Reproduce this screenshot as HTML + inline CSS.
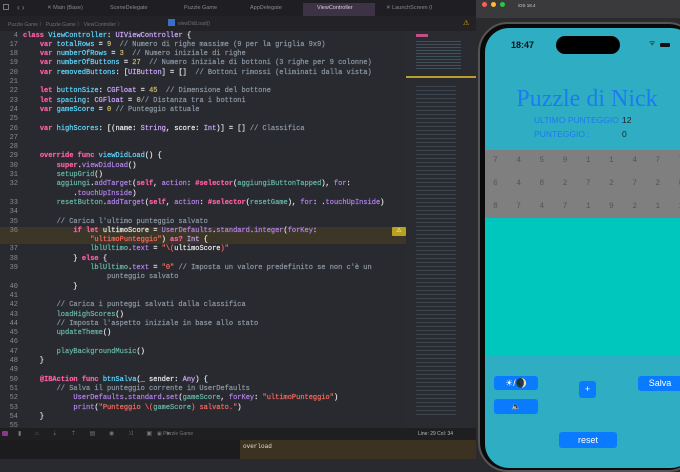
<!DOCTYPE html>
<html><head><meta charset="utf-8"><style>
*{margin:0;padding:0;box-sizing:border-box}
body{width:680px;height:459px;overflow:hidden;background:#292a30;position:relative;font-family:"Liberation Sans",sans-serif}
.abs{position:absolute}
#code{position:absolute;left:0;top:31px;width:406px;height:397px;background:#292a30}
.l{position:absolute;left:0;height:9.3px;width:406px;font:7px/9.3px "Liberation Mono",monospace;color:#e8e8ea;white-space:pre;-webkit-text-stroke:0.2px}
.n{display:inline-block;width:18px;text-align:right;color:#8a8a8e;margin-right:5px;-webkit-text-stroke:0}
.k{color:#fc5fa3;font-weight:bold}.t{color:#d0a8ff}.d{color:#5dd8ff}.p{color:#67b7a4}.c{color:#8c98a4}.m{color:#d0bf69}.s{color:#fc6a5d}.f{color:#b281eb}
.g{font:8px "Liberation Mono",monospace;color:#555;position:absolute}
.btn{position:absolute;background:#0a7aff;border-radius:3px;color:#fff;font-size:9px;text-align:center}
</style></head><body>
<div class="abs" style="left:0;top:0;width:478px;height:16px;background:#1f1f23;font-size:5.5px;color:#8a8a8e">
<div class="abs" style="left:3px;top:4px;width:6px;height:6px;border:1px solid #777"></div>
<span class="abs" style="left:17px;top:3px;font-size:8px">‹ ›</span>
<span class="abs" style="left:47px;top:5px">✕ Main (Base)</span>
<span class="abs" style="left:110px;top:5px">SceneDelegate</span>
<span class="abs" style="left:184px;top:5px">Puzzle Game</span>
<span class="abs" style="left:250px;top:5px">AppDelegate</span>
<div class="abs" style="left:303px;top:3px;width:72px;height:13px;background:#3e3346;color:#d8d0e0;padding:2px 0 0 14px">ViewController</div>
<span class="abs" style="left:386px;top:5px">✕ LaunchScreen (I</span>
</div>
<div class="abs" style="left:0;top:16px;width:478px;height:15px;background:#232327;font-size:5px;color:#6e6e73">
<span class="abs" style="left:8px;top:5px">Puzzle Game 〉 Puzzle Game 〉 ViewController 〉</span>
<span class="abs" style="left:168px;top:3px;width:7px;height:7px;background:#3a6fc8"></span>
<span class="abs" style="left:178px;top:5px">viewDidLoad()</span>
<span class="abs" style="left:463px;top:3px;color:#e0b000;font-size:7px">⚠</span>
</div>
<div id="code">
<div class="abs" style="left:0;top:196px;width:406px;height:17px;background:#3b3628"></div>
<div class="abs" style="left:392px;top:196px;width:14px;height:9px;background:#b8a020;border-radius:1px;font-size:6px;text-align:center;color:#fff">⚠</div>
</div>
<div id="lines"></div>
<div class="abs" style="left:406px;top:31px;width:70px;height:397px;background:#2a2b31">
<div class="abs" style="left:10px;top:3px;width:12px;height:3px;background:#c0508a"></div>
<div class="abs" style="left:0;top:45px;width:70px;height:2px;background:#b89e2a"></div>
<div class="abs" style="left:10px;top:10px;width:45px;height:30px;background:repeating-linear-gradient(#4d6a78 0 1px,transparent 1px 3px);opacity:.6"></div>
<div class="abs" style="left:10px;top:55px;width:40px;height:330px;background:repeating-linear-gradient(#4d5e6a 0 1px,transparent 1px 4px);opacity:.5"></div>
</div>
<div class="abs" style="left:0;top:428px;width:478px;height:12px;background:#1f1f22;font-size:5px;color:#777">
<span class="abs" style="left:2px;top:3px;width:6px;height:5px;background:#8a3a8a;border-radius:1px"></span>
<span class="abs" style="left:18px;top:2px;font-size:6px;letter-spacing:6px">▮ ⌂ ⇣ ⇡ ▤ ◉ ⤨ ▣ ➤</span>
<span class="abs" style="left:157px;top:3px">▣ Puzzle Game</span>
<span class="abs" style="left:418px;top:3px;color:#bbb">Line: 29 Col: 34</span>
</div>
<div class="abs" style="left:0;top:440px;width:478px;height:19px;background:#1c1c1e"></div>
<div class="abs" style="left:240px;top:440px;width:238px;height:19px;background:#3b3222;font:6px 'Liberation Mono',monospace;color:#e8e0d0;padding:3px 3px">overload</div>
<div class="abs" style="left:476px;top:0;width:204px;height:18px;background:#3a3a3c"></div>
<div class="abs" style="left:482px;top:2px;width:5px;height:5px;border-radius:50%;background:#ff5f57"></div>
<div class="abs" style="left:491px;top:2px;width:5px;height:5px;border-radius:50%;background:#febc2e"></div>
<div class="abs" style="left:500px;top:2px;width:5px;height:5px;border-radius:50%;background:#28c840"></div>
<span class="abs" style="left:518px;top:3px;font-size:4.5px;color:#ccc">iOS 18.4</span>
<div class="abs" style="left:476px;top:18px;width:204px;height:441px;background:#2b2b2e"></div>
<div class="abs" style="left:478px;top:22px;width:220px;height:450px;background:#0a0a0a;border-radius:30px;border:2px solid #555"></div>
<div class="abs" style="left:485px;top:28px;width:210px;height:440px;background:#2eadc3;border-radius:24px;overflow:hidden">
<span class="abs" style="left:26px;top:12px;font-size:9px;font-weight:bold;color:#111">18:47</span>
<div class="abs" style="left:71px;top:8px;width:64px;height:18px;background:#000;border-radius:9px"></div>
<span class="abs" style="left:164px;top:11px;font-size:7px;color:#111">ᯤ</span>
<div class="abs" style="left:175px;top:15px;width:10px;height:4px;background:#111;border-radius:1px"></div>
<div class="abs" style="left:0;top:58px;width:210px;text-align:center;font:24px 'Liberation Serif',serif;color:#1a7cf0;padding-right:6px">Puzzle di Nick</div>
<span class="abs" style="left:49px;top:87px;font-size:8.5px;color:#1a7cf0">ULTIMO PUNTEGGIO :</span>
<span class="abs" style="left:137px;top:87px;font-size:8.5px;color:#222">12</span>
<span class="abs" style="left:49px;top:101px;font-size:8.5px;color:#1a7cf0">PUNTEGGIO :</span>
<span class="abs" style="left:137px;top:101px;font-size:8.5px;color:#222">0</span>
<div class="abs" style="left:0;top:122px;width:210px;height:68px;background:#7f7f7f"></div>
<div class="abs" style="left:0;top:190px;width:210px;height:138px;background:#00c7be"></div>
</div>
<div id="grid"></div>
<div class="btn" style="left:494px;top:376px;width:44px;height:14px;font-size:9px;line-height:14px">☀/🌒</div>
<div class="btn" style="left:494px;top:399px;width:44px;height:15px;line-height:15px;font-size:8px">🔈</div>
<div class="btn" style="left:579px;top:381px;width:17px;height:17px;line-height:17px">+</div>
<div class="btn" style="left:638px;top:376px;width:44px;height:15px;line-height:15px">Salva</div>
<div class="btn" style="left:559px;top:432px;width:58px;height:16px;line-height:16px">reset</div>
<script>
const L=[
['4','<span class="k">class</span> <span class="d">ViewController</span>: <span class="t">UIViewController</span> {'],
['17','    <span class="k">var</span> <span class="d">totalRows</span> = <span class="m">9</span>  <span class="c">// Numero di righe massime (9 per la griglia 9x9)</span>'],
['18','    <span class="k">var</span> <span class="d">numberOfRows</span> = <span class="m">3</span>  <span class="c">// Numero iniziale di righe</span>'],
['19','    <span class="k">var</span> <span class="d">numberOfButtons</span> = <span class="m">27</span>  <span class="c">// Numero iniziale di bottoni (3 righe per 9 colonne)</span>'],
['20','    <span class="k">var</span> <span class="d">removedButtons</span>: [<span class="t">UIButton</span>] = []  <span class="c">// Bottoni rimossi (eliminati dalla vista)</span>'],
['21',''],
['22','    <span class="k">let</span> <span class="d">buttonSize</span>: <span class="t">CGFloat</span> = <span class="m">45</span>  <span class="c">// Dimensione del bottone</span>'],
['23','    <span class="k">let</span> <span class="d">spacing</span>: <span class="t">CGFloat</span> = <span class="m">0</span><span class="c">// Distanza tra i bottoni</span>'],
['24','    <span class="k">var</span> <span class="d">gameScore</span> = <span class="m">0</span> <span class="c">// Punteggio attuale</span>'],
['25',''],
['26','    <span class="k">var</span> <span class="d">highScores</span>: [(name: <span class="t">String</span>, score: <span class="t">Int</span>)] = [] <span class="c">// Classifica</span>'],
['27',''],['28',''],
['29','    <span class="k">override func</span> <span class="d">viewDidLoad</span>() {'],
['30','        <span class="k">super</span>.<span class="f">viewDidLoad</span>()'],
['31','        <span class="p">setupGrid</span>()'],
['32','        <span class="p">aggiungi</span>.<span class="f">addTarget</span>(<span class="k">self</span>, <span class="f">action</span>: <span class="k">#selector</span>(<span class="p">aggiungiButtonTapped</span>), <span class="f">for</span>:'],
['','            .<span class="f">touchUpInside</span>)'],
['33','        <span class="p">resetButton</span>.<span class="f">addTarget</span>(<span class="k">self</span>, <span class="f">action</span>: <span class="k">#selector</span>(<span class="p">resetGame</span>), <span class="f">for</span>: .<span class="f">touchUpInside</span>)'],
['34',''],
['35','        <span class="c">// Carica l\'ultimo punteggio salvato</span>'],
['36','            <span class="k">if let</span> ultimoScore = <span class="f">UserDefaults</span>.<span class="f">standard</span>.<span class="f">integer</span>(<span class="f">forKey</span>:'],
['','                <span class="s">"ultimoPunteggio"</span>) <span class="k">as?</span> <span class="t">Int</span> {'],
['37','                <span class="p">lblUltimo</span>.<span class="f">text</span> = <span class="s">"\\(</span>ultimoScore<span class="s">)"</span>'],
['38','            } <span class="k">else</span> {'],
['39','                <span class="p">lblUltimo</span>.<span class="f">text</span> = <span class="s">"0"</span> <span class="c">// Imposta un valore predefinito se non c\'è un</span>'],
['','                    <span class="c">punteggio salvato</span>'],
['40','            }'],
['41',''],
['42','        <span class="c">// Carica i punteggi salvati dalla classifica</span>'],
['43','        <span class="p">loadHighScores</span>()'],
['44','        <span class="c">// Imposta l\'aspetto iniziale in base allo stato</span>'],
['45','        <span class="p">updateTheme</span>()'],
['46',''],
['47','        <span class="p">playBackgroundMusic</span>()'],
['48','    }'],
['49',''],
['50','    <span class="k">@IBAction func</span> <span class="d">btnSalva</span>(_ sender: <span class="t">Any</span>) {'],
['51','        <span class="c">// Salva il punteggio corrente in UserDefaults</span>'],
['52','            <span class="f">UserDefaults</span>.<span class="f">standard</span>.<span class="f">set</span>(<span class="p">gameScore</span>, <span class="f">forKey</span>: <span class="s">"ultimoPunteggio"</span>)'],
['53','            <span class="f">print</span>(<span class="s">"Punteggio \\(</span><span class="p">gameScore</span><span class="s">) salvato."</span>)'],
['54','    }'],
['55','']];
let h='';L.forEach((r,i)=>{h+=`<div class="l" style="top:${31.5+i*9.3}px"><span class="n">${r[0]}</span>${r[1]}</div>`});
document.getElementById('lines').innerHTML=h;
const G=[[7,4,5,9,1,1,4,7,7],[6,4,8,2,7,2,7,2,8],[8,7,4,7,1,9,2,1,1]];
let g='';G.forEach((r,i)=>r.forEach((v,j)=>{g+=`<span class="g" style="left:${493+j*23.2}px;top:${156+i*23}px">${v}</span>`}));
document.getElementById('grid').innerHTML=g;
</script>
</body></html>
